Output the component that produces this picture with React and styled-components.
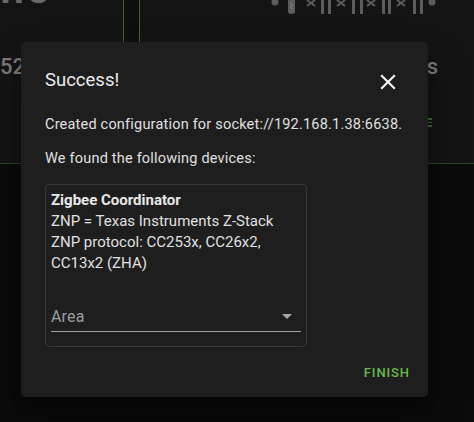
import React from "react";
import styled, { createGlobalStyle } from "styled-components";

const GlobalStyle = createGlobalStyle`
  html, body {
    margin: 0;
    padding: 0;
    background: #0b0b0b;
  }
  body {
    font-family: Roboto, "Noto Sans", sans-serif;
    -webkit-font-smoothing: antialiased;
  }
`;

function App() {
  return (
    <Page>
      <GlobalStyle />
      <Backdrop>
        <TopPanel>
          <HeaderRow>
            <BigTitle>ne</BigTitle>
            <Rails />
            <IconStrip />
          </HeaderRow>
          <StatRow>
            <StatText>52</StatText>
            <StatText>s</StatText>
          </StatRow>
          <MenuRow>
            <MenuGlyph>
              <span />
              <span />
              <span />
            </MenuGlyph>
          </MenuRow>
        </TopPanel>
      </Backdrop>

      <Dialog>
        <DialogHeader>
          <Title>Success!</Title>
          <CloseButton aria-label="close">
            <svg width="26" height="26" viewBox="0 0 24 24">
              <path
                fill="currentColor"
                d="M19 6.41L17.59 5 12 10.59 6.41 5 5 6.41 10.59 12 5 17.59 6.41 19 12 13.41 17.59 19 19 17.59 13.41 12z"
              />
            </svg>
          </CloseButton>
        </DialogHeader>
        <DialogBody>
          <Para>Created configuration for socket://192.168.1.38:6638.</Para>
          <Para>We found the following devices:</Para>
          <DeviceCard>
            <DeviceName>Zigbee Coordinator</DeviceName>
            <DeviceLine>ZNP = Texas Instruments Z-Stack</DeviceLine>
            <DeviceLine>ZNP protocol: CC253x, CC26x2, CC13x2 (ZHA)</DeviceLine>
            <Select>
              <SelectLabel>Area</SelectLabel>
              <Caret />
            </Select>
          </DeviceCard>
        </DialogBody>
        <Actions>
          <TextButton>Finish</TextButton>
        </Actions>
      </Dialog>
    </Page>
  );
}

function IconStrip() {
  const crosses = [310, 340, 370, 400];
  const bars = [321, 328, 352, 360, 382, 388, 413, 420];
  return (
    <StripSvg width="180" height="18" viewBox="264 0 180 18">
      <g fill="#5c5c5c" stroke="#5c5c5c">
        <circle cx="274" cy="2" r="3.5" stroke="none" />
        <rect x="287" y="-2" width="7" height="16" rx="3" stroke="none" />
        {crosses.map((x) => (
          <g key={x} strokeWidth="2">
            <line x1={x - 4} y1="0" x2={x + 4} y2="6" />
            <line x1={x + 4} y1="0" x2={x - 4} y2="6" />
          </g>
        ))}
        {bars.map((x) => (
          <rect key={x} x={x - 1} y="-2" width="3" height="16" stroke="none" />
        ))}
        <circle cx="431" cy="2" r="3.5" stroke="none" />
      </g>
      <path d="M289 3 l3 2 l-3 2 l3 2" stroke="#8a8a8a" fill="none" strokeWidth="0.8" />
    </StripSvg>
  );
}

export default App;

const Page = styled.div`
  position: relative;
  width: 474px;
  height: 422px;
  overflow: hidden;
  background: #0b0b0b;
`;

const Backdrop = styled.div`
  display: flex;
  flex-direction: column;
`;

const TopPanel = styled.div`
  height: 163px;
  background: #141414;
  border-bottom: 1px solid #2c4623;
  display: flex;
  flex-direction: column;
`;

const HeaderRow = styled.div`
  display: flex;
  align-items: flex-start;
  height: 43px;
`;

const BigTitle = styled.div`
  font-family: "Liberation Mono", monospace;
  font-weight: bold;
  font-size: 40px;
  line-height: 40px;
  color: #6a6a6a;
  margin-top: -27px;
  width: 123px;
  letter-spacing: 2px;
  overflow: hidden;
`;

const Rails = styled.div`
  width: 15px;
  height: 43px;
  border-left: 1px solid #3a6429;
  border-right: 1px solid #3a6429;
  background: #0e0e0e;
`;

const StripSvg = styled.svg`
  margin-left: 125px;
  display: block;
`;

const StatRow = styled.div`
  display: flex;
  justify-content: space-between;
  padding: 11px 36px 0 0;
  font-size: 22px;
`;

const StatText = styled.span`
  color: #7c7c7c;
  font-weight: 500;
  line-height: 26px;
`;

const MenuRow = styled.div`
  display: flex;
  justify-content: flex-end;
  padding: 38px 42px 0 0;
`;

const MenuGlyph = styled.div`
  display: flex;
  flex-direction: column;
  gap: 2px;
  span {
    display: block;
    width: 5px;
    height: 1.5px;
    background: #3f6b31;
  }
`;

const Dialog = styled.div`
  position: absolute;
  left: 21px;
  top: 42px;
  width: 407px;
  height: 355px;
  box-sizing: border-box;
  background: #1e1e1e;
  border-radius: 5px;
  box-shadow: 0 11px 15px -7px rgba(0, 0, 0, 0.4), 0 24px 38px 3px rgba(0, 0, 0, 0.3);
  display: flex;
  flex-direction: column;
  color: #e3e3e3;
`;

const DialogHeader = styled.div`
  display: flex;
  align-items: center;
  justify-content: space-between;
  padding: 22px 27px 0 24px;
  height: 32px;
`;

const Title = styled.h2`
  margin: 0;
  font-size: 18.5px;
  font-weight: 400;
  line-height: 32px;
  color: #ececec;
`;

const CloseButton = styled.button`
  border: none;
  background: none;
  padding: 0;
  color: #f2f2f2;
  display: flex;
  margin-top: 4px;
  cursor: pointer;
`;

const DialogBody = styled.div`
  padding: 19px 24px 0;
  display: flex;
  flex-direction: column;
`;

const Para = styled.p`
  margin: 0 0 14px;
  font-size: 14.5px;
  line-height: 20px;
  letter-spacing: 0.2px;
  white-space: nowrap;
  color: #e0e0e0;
`;

const DeviceCard = styled.div`
  width: 262px;
  box-sizing: border-box;
  margin-top: 1px;
  border: 1px solid #3a3a3a;
  border-radius: 4px;
  padding: 5px 5px 14px;
  display: flex;
  flex-direction: column;
`;

const DeviceName = styled.div`
  font-weight: 700;
  font-size: 15px;
  line-height: 21px;
  color: #e8e8e8;
`;

const DeviceLine = styled.div`
  font-size: 15px;
  line-height: 21px;
  color: #e0e0e0;
`;

const Select = styled.div`
  margin-top: 2px;
  height: 56px;
  box-sizing: border-box;
  border-bottom: 1px solid #a0a0a0;
  display: flex;
  align-items: flex-end;
  justify-content: space-between;
  padding: 0 9px 4px 0;
`;

const SelectLabel = styled.span`
  font-size: 16px;
  line-height: 20px;
  color: #9c9c9c;
  letter-spacing: 0.15px;
`;

const Caret = styled.span`
  width: 0;
  height: 0;
  border-left: 5px solid transparent;
  border-right: 5px solid transparent;
  border-top: 5px solid #a8a8a8;
  margin-bottom: 8px;
`;

const Actions = styled.div`
  margin-top: auto;
  display: flex;
  justify-content: flex-end;
  padding: 7px 10px 8px;
`;

const TextButton = styled.button`
  border: none;
  background: none;
  font-family: Roboto, sans-serif;
  font-size: 13px;
  font-weight: 500;
  letter-spacing: 0.9px;
  text-transform: uppercase;
  color: #68ba4b;
  padding: 8px 8px;
  height: 36px;
  cursor: pointer;
`;
